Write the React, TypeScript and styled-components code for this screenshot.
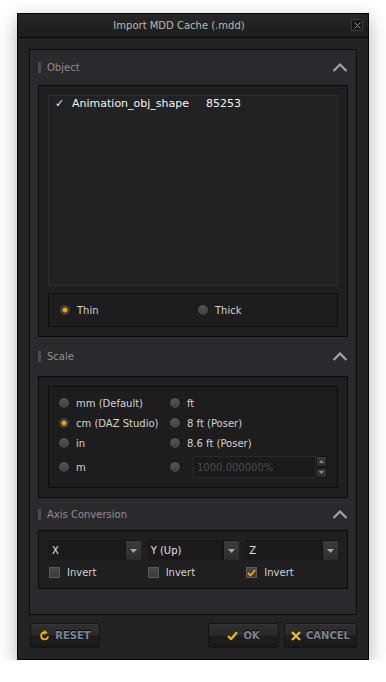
import React from 'react';
import styled, { createGlobalStyle } from 'styled-components';

const GlobalStyle = createGlobalStyle`
  html, body {
    margin: 0;
    padding: 0;
    background: #ffffff;
  }
  body {
    font-family: "DejaVu Sans", "Liberation Sans", sans-serif;
    font-size: 10px;
  }
`;

const Page = styled.div`
  padding: 13px 0 0 17px;
`;

const Window = styled.div`
  width: 352px;
  height: 647px;
  box-sizing: border-box;
  border: 1px solid #060606;
  background: #232323;
  box-shadow: 0 6px 18px rgba(0, 0, 0, 0.3);
  display: flex;
  flex-direction: column;
`;

const TitleBar = styled.div`
  position: relative;
  height: 23px;
  border-bottom: 1px solid #050505;
  background: linear-gradient(#272727, #1c1c1c);
  display: flex;
  align-items: center;
  justify-content: center;
  padding-right: 28px;
  color: #b8b8b8;
  font-size: 10px;
`;

const CloseButton = styled.div`
  position: absolute;
  right: 5px;
  top: 5px;
  width: 10px;
  height: 10px;
  border: 1px solid #3c3c3c;
  border-radius: 1px;
  background: #161616;
  display: flex;
  align-items: center;
  justify-content: center;
`;

const Body = styled.div`
  flex: 1;
  display: flex;
  flex-direction: column;
  padding: 11px 11px 11px;
`;

const Panel = styled.div`
  flex: 1;
  border: 1px solid #0b0b0b;
  background: #2a2a2c;
  padding: 0 8px;
  display: flex;
  flex-direction: column;
`;

const SectionHeader = styled.div<{ $h: number }>`
  height: ${(p) => p.$h}px;
  display: flex;
  align-items: center;
  color: #8e8e8e;
  font-size: 10px;
`;

const HeaderBar = styled.span`
  width: 3px;
  height: 11px;
  background: #4c4c4e;
  margin-right: 6px;
`;

const HeaderTitle = styled.span`
  flex: 1;
`;

const Box = styled.div<{ $h: number }>`
  height: ${(p) => p.$h}px;
  box-sizing: border-box;
  border: 1px solid #0a0a0a;
  background: #1f1f1f;
  padding: 9px;
  display: flex;
  flex-direction: column;
`;

const List = styled.div`
  height: 191px;
  box-sizing: border-box;
  border: 1px solid #2e2e2e;
  background: #222222;
  padding: 1px 6px;
`;

const ListRow = styled.div`
  display: flex;
  align-items: center;
  height: 13px;
  color: #f4f4f4;
  font-size: 11px;
`;

const ListCheck = styled.span`
  width: 17px;
  font-size: 11px;
  font-weight: bold;
  color: #e8e8e8;
`;

const ListCount = styled.span`
  margin-left: 17px;
`;

const InnerBox = styled.div<{ $h: number }>`
  height: ${(p) => p.$h}px;
  box-sizing: border-box;
  border: 1px solid #0c0c0c;
  background: #1d1d1d;
`;

const ThicknessRow = styled(InnerBox)`
  margin-top: 7px;
  display: flex;
  align-items: center;
  padding-left: 11px;
`;

const Option = styled.label<{ $w?: number }>`
  display: flex;
  align-items: center;
  gap: 7px;
  width: ${(p) => (p.$w ? `${p.$w}px` : 'auto')};
  color: #d2d2d2;
  font-size: 10px;
  white-space: nowrap;
`;

const RadioDot = styled.span<{ $on?: boolean }>`
  width: 10px;
  height: 10px;
  border-radius: 50%;
  box-sizing: border-box;
  background: ${(p) =>
    p.$on
      ? 'radial-gradient(circle, #ffb000 0, #f39a00 2px, #3a3a3a 3px, #444 5px)'
      : 'linear-gradient(#555, #404040)'};
  box-shadow: 0 0 0 1px #191919;
  flex: none;
`;

const ScaleGrid = styled(InnerBox)`
  display: grid;
  grid-template-columns: 111px 1fr;
  grid-template-rows: 20px 20px 20px 28px;
  padding: 6px 0 0 10px;
`;

const SpinWrap = styled.div`
  display: flex;
  align-items: center;
  gap: 13px;
`;

const SpinBox = styled.div`
  display: flex;
  height: 22px;
`;

const SpinField = styled.div`
  width: 123px;
  box-sizing: border-box;
  border: 1px solid #2a2a2a;
  background: #1a1a1a;
  color: #4c4c4c;
  font-size: 10px;
  display: flex;
  align-items: center;
  padding-left: 3px;
`;

const SpinButtons = styled.div`
  width: 11px;
  display: flex;
  flex-direction: column;
  gap: 1px;
`;

const SpinButton = styled.div`
  flex: 1;
  background: linear-gradient(#3a3a3a, #2c2c2c);
  border: 1px solid #151515;
  display: flex;
  align-items: center;
  justify-content: center;
`;

const AxisBox = styled(Box)`
  padding: 9px 9px 0;
`;

const AxisGrid = styled.div`
  display: grid;
  grid-template-columns: repeat(3, 1fr);
  column-gap: 6px;
  row-gap: 7px;
`;

const Combo = styled.div`
  height: 20px;
  display: flex;
  box-sizing: border-box;
  background: #1a1a1a;
  border-top: 1px solid #141414;
`;

const ComboText = styled.div`
  flex: 1;
  display: flex;
  align-items: center;
  padding-left: 4px;
  color: #e2e2e2;
  font-size: 10px;
`;

const ComboDrop = styled.div`
  width: 15px;
  background: linear-gradient(#3c3c3c, #2e2e2e);
  border-left: 1px solid #111;
  display: flex;
  align-items: center;
  justify-content: center;
`;

const CheckOption = styled(Option)`
  gap: 7px;
  padding-left: 1px;
`;

const CheckBox = styled.span`
  width: 11px;
  height: 11px;
  box-sizing: border-box;
  border: 1px solid #5a5a5a;
  background: linear-gradient(#4a4a4a, #3a3a3a);
  display: flex;
  align-items: center;
  justify-content: center;
  flex: none;
`;

const ButtonRow = styled.div`
  display: flex;
  gap: 5px;
  margin-top: 8px;
  padding-left: 1px;
`;

const Spacer = styled.div`
  flex: 1;
`;

const ActionButton = styled.div<{ $w: number }>`
  width: ${(p) => p.$w}px;
  height: 25px;
  box-sizing: border-box;
  border: 1px solid #121212;
  border-radius: 3px;
  background: linear-gradient(#2f2f2f 0%, #2a2a2a 46%, #1d1d1d 54%, #1a1a1a 100%);
  box-shadow: inset 0 1px 0 #363636;
  display: flex;
  align-items: center;
  justify-content: center;
  gap: 5px;
  color: #7d8593;
  font-weight: bold;
  font-size: 10px;
  text-shadow: 0 -1px 0 #000;
`;

const Chevron = () => (
  <svg width="16" height="9" viewBox="0 0 16 9">
    <polyline points="1.5,8 8,1.5 14.5,8" fill="none" stroke="#a2a2a2" strokeWidth="2.2" />
  </svg>
);

const DownArrow = () => (
  <svg width="7" height="4" viewBox="0 0 7 4">
    <polygon points="0,0 7,0 3.5,4" fill="#a8a8a8" />
  </svg>
);

const Radio = ({ label, on, w }: { label?: string; on?: boolean; w?: number }) => (
  <Option $w={w}>
    <RadioDot $on={on} />
    {label}
  </Option>
);

const Check = ({ on }: { on?: boolean }) => (
  <CheckBox>
    {on && (
      <svg width="9" height="8" viewBox="0 0 9 8">
        <polyline points="1,4 3.5,6.5 8,1" fill="none" stroke="#f5a800" strokeWidth="1.8" />
      </svg>
    )}
  </CheckBox>
);

const axes = [
  { name: 'X', invert: false },
  { name: 'Y (Up)', invert: false },
  { name: 'Z', invert: true },
];

export default function App() {
  return (
    <Page>
      <GlobalStyle />
      <Window>
        <TitleBar>
          Import MDD Cache (.mdd)
          <CloseButton>
            <svg width="7" height="7" viewBox="0 0 7 7">
              <path d="M0.5 0.5 L6.5 6.5 M6.5 0.5 L0.5 6.5" stroke="#8a8a8a" strokeWidth="1" />
            </svg>
          </CloseButton>
        </TitleBar>
        <Body>
          <Panel>
            <SectionHeader $h={35}>
              <HeaderBar />
              <HeaderTitle>Object</HeaderTitle>
              <Chevron />
            </SectionHeader>
            <Box $h={252}>
              <List>
                <ListRow>
                  <ListCheck>✓</ListCheck>
                  <span>Animation_obj_shape</span>
                  <ListCount>85253</ListCount>
                </ListRow>
              </List>
              <ThicknessRow $h={34}>
                <Radio label="Thin" on w={138} />
                <Radio label="Thick" />
              </ThicknessRow>
            </Box>

            <SectionHeader $h={39}>
              <HeaderBar />
              <HeaderTitle>Scale</HeaderTitle>
              <Chevron />
            </SectionHeader>
            <Box $h={122}>
              <ScaleGrid $h={102}>
                <Radio label="mm (Default)" />
                <Radio label="ft" />
                <Radio label="cm (DAZ Studio)" on />
                <Radio label="8 ft (Poser)" />
                <Radio label="in" />
                <Radio label="8.6 ft (Poser)" />
                <Radio label="m" />
                <SpinWrap>
                  <RadioDot />
                  <SpinBox>
                    <SpinField>1000.000000%</SpinField>
                    <SpinButtons>
                      <SpinButton>
                        <svg width="5" height="3" viewBox="0 0 5 3">
                          <polygon points="0,3 5,3 2.5,0" fill="#8a8a8a" />
                        </svg>
                      </SpinButton>
                      <SpinButton>
                        <svg width="5" height="3" viewBox="0 0 5 3">
                          <polygon points="0,0 5,0 2.5,3" fill="#8a8a8a" />
                        </svg>
                      </SpinButton>
                    </SpinButtons>
                  </SpinBox>
                </SpinWrap>
              </ScaleGrid>
            </Box>

            <SectionHeader $h={32}>
              <HeaderBar />
              <HeaderTitle>Axis Conversion</HeaderTitle>
              <Chevron />
            </SectionHeader>
            <AxisBox $h={59}>
              <AxisGrid>
                {axes.map((a) => (
                  <Combo key={a.name}>
                    <ComboText>{a.name}</ComboText>
                    <ComboDrop>
                      <DownArrow />
                    </ComboDrop>
                  </Combo>
                ))}
                {axes.map((a) => (
                  <CheckOption key={a.name + '-inv'}>
                    <Check on={a.invert} />
                    Invert
                  </CheckOption>
                ))}
              </AxisGrid>
            </AxisBox>
          </Panel>
          <ButtonRow>
            <ActionButton $w={70}>
              <svg width="11" height="11" viewBox="0 0 12 12">
                <path d="M6 2.6 A3.8 3.8 0 1 0 9.9 7" fill="none" stroke="#e9b600" strokeWidth="2" />
                <polygon points="5.4,0 9.4,2.6 5.4,5.2" fill="#e9b600" />
              </svg>
              RESET
            </ActionButton>
            <Spacer />
            <ActionButton $w={71}>
              <svg width="11" height="9" viewBox="0 0 11 9">
                <polyline points="1,5 4,8 10,1.2" fill="none" stroke="#e9b600" strokeWidth="2.4" />
              </svg>
              OK
            </ActionButton>
            <ActionButton $w={73}>
              <svg width="10" height="10" viewBox="0 0 10 10">
                <path d="M1 1 L9 9 M9 1 L1 9" stroke="#f0c020" strokeWidth="2.2" />
              </svg>
              CANCEL
            </ActionButton>
          </ButtonRow>
        </Body>
      </Window>
    </Page>
  );
}
